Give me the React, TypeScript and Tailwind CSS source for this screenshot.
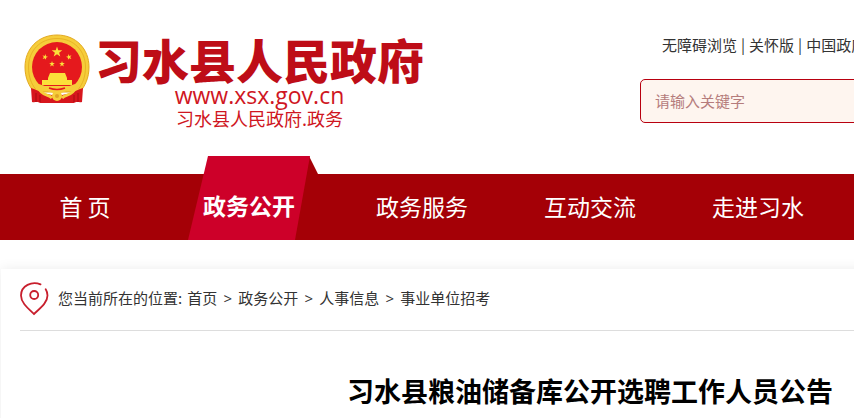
const navItems = ["首 页", "政务公开", "政务服务", "互动交流", "走进习水"];
const crumbs = ["首页", "政务公开", "人事信息", "事业单位招考"];
const topLinks = ["无障碍浏览", "关怀版", "中国政府网"];

const STAR = "M0-10 2.3-3.2 9.5-3.1 3.8 1.2 5.9 8.1 0 4-5.9 8.1-3.8 1.2-9.5-3.1-2.3-3.2Z";

function Emblem() {
  return (
    <svg className="h-[70px] w-[68px] shrink-0" viewBox="0 0 68 70" aria-hidden="true">
      {/* Corona de trigo */}
      <path
        d="M34 1C15 1 2 15 2 33c0 11 4 19 9 25l46 0c5-6 9-14 9-25C66 15 53 1 34 1Z"
        fill="#f6cd3a"
        stroke="#e3a91f"
        strokeWidth="1"
      />
      <path
        d="M34 4.500C17 4.500 5.500 17 5.500 33c0 10 3 17 7 22M34 4.500C51 4.500 62.500 17 62.500 33c0 10-3 17-7 22"
        fill="none"
        stroke="#e9b326"
        strokeWidth="1"
      />
      <circle cx="34" cy="33" r="25" fill="#e5191d" />
      <g fill="#fbe03a">
        <path d={STAR} transform="translate(34 18) scale(.56)" />
        <path d={STAR} transform="translate(22 23) rotate(15) scale(.3)" />
        <path d={STAR} transform="translate(46 23) rotate(-15) scale(.3)" />
        <path d={STAR} transform="translate(29 30) scale(.3)" />
        <path d={STAR} transform="translate(39 30) scale(.3)" />
        <path d="M27 39h15l2 5H25Zm-2 5h19v2h5v5H19v-5h6Z" />
      </g>
      {/* Cinta roja */}
      <path
        d="M8 54c4 1 8 3 11 5l15 3 15-3c3-2 7-4 11-5l-1 14c-3 1-5-1-8 1H17c-3-2-5 0-8-1Z"
        fill="#d7161d"
      />
      <path
        d="M11 51c9-1 14 7 23 7s14-8 23-7M16 54c2 8 10 6 13 10m23-10c-2 8-10 6-13 10"
        fill="none"
        stroke="#f6cd3a"
        strokeWidth="3"
      />
      <path d="M19 52h30v3q-8 3-15 3t-15-3Z" fill="#f6cd3a" />
      <path d="M26 54q8 3 16 0" fill="none" stroke="#e5191d" strokeWidth="1.5" />
      <path d="M13 59v9m4-7v7m38-9v9m-4-7v7" stroke="#a80b12" strokeWidth="1" />
      <circle cx="34" cy="62" r="5" fill="#f6cd3a" />
      <circle cx="34" cy="62" r="2" fill="#e0a426" />
    </svg>
  );
}

function Header() {
  return (
    <header className="flex h-[174px] items-start">
      <a href="#" className="flex w-[640px] pl-[23px] pt-[34px]">
        <Emblem />
        <div className="ml-1 flex flex-col items-center whitespace-nowrap text-[#be0d17]">
          <span className="text-[47px] font-black leading-[50px]">习水县人民政府</span>
          <span className="font-['Open_Sans',sans-serif] text-[23px] leading-[23px] text-[#cf1622]">
            www.xsx.gov.cn
          </span>
          <span className="text-[18px] leading-[22px] text-[#cf1622]">习水县人民政府.政务</span>
        </div>
      </a>
      <div className="flex-1 pt-[33px]">
        <div className="flex gap-1 whitespace-nowrap pl-[22px] text-[15px] leading-[24px] text-[#333]">
          {topLinks.map((label, i) => (
            <span key={label} className="flex gap-1">
              {i > 0 && <span>|</span>}
              <a href="#">{label}</a>
            </span>
          ))}
        </div>
        <input
          type="text"
          aria-label="请输入关键字"
          placeholder="请输入关键字"
          className="mt-[22px] block h-[44px] w-full rounded-[5px] border border-[#b8000f] bg-[#fef5ef] px-[14px] pb-[2px] text-[15px] outline-none placeholder:text-[#b57c7c]"
        />
      </div>
    </header>
  );
}

function Nav() {
  return (
    <nav className="flex h-[66px] bg-[#a40006] text-[23px] text-white">
      {navItems.map((label, i) =>
        i === 1 ? (
          <a
            key={label}
            href="#"
            aria-current="page"
            className="relative flex w-[168px] items-center justify-center pb-1 pr-[10px] font-bold"
          >
            {/* La pestaña activa sobresale por encima de la barra */}
            <svg className="absolute bottom-0 left-[18px] h-[85px] w-[132px]" viewBox="0 0 132 85" aria-hidden="true">
              <path d="M121 1 130 19H116Z" fill="#a40006" />
              <path d="M20 1H122L107 85H0Z" fill="#cd0029" />
            </svg>
            <span className="relative">{label}</span>
          </a>
        ) : (
          <a key={label} href="#" className="flex w-[168px] items-center justify-center pb-[2px] first:w-[170px]">
            {label}
          </a>
        )
      )}
    </nav>
  );
}

function PinIcon() {
  return (
    <svg
      className="h-[34px] w-[30px] shrink-0"
      viewBox="0 0 30 34"
      fill="none"
      stroke="#c81f2d"
      strokeWidth="1.8"
      strokeLinecap="round"
      aria-hidden="true"
    >
      <path d="M20.500 2.300C12 -1.200 1 3.500 1 13.500c0 7 6 12 13 18.500C21 25.500 27.500 20.500 27.500 13.500c0-2.500-.6-4.300-1.800-6.200" />
      <circle cx="14.200" cy="13" r="4" />
    </svg>
  );
}

export default function App() {
  return (
    <div className="overflow-hidden bg-white font-['Noto_Sans_CJK_SC',sans-serif]">
      <div className="min-w-[1180px]">
        <Header />
        <Nav />
        <main className="ml-px mt-[29px] min-h-[160px] bg-white pl-[19px] shadow-[0_0_12px_rgba(0,0,0,0.08)]">
          <div className="flex h-[62px] items-center gap-2 border-b border-[#ddd] pb-[2px] text-[15px] text-[#333]">
            <PinIcon />
            <div className="flex whitespace-nowrap">
              <span className="mr-[5px]">您当前所在的位置:</span>
              {crumbs.map((label, i) => (
                <span key={label} className="flex">
                  {i > 0 && <span className="w-[21px] text-center font-['Open_Sans',sans-serif]">&gt;</span>}
                  <a href="#">{label}</a>
                </span>
              ))}
            </div>
          </div>
          <h1 className="mt-[40px] pr-5 text-center text-[27px] font-bold leading-[40px] text-black">
            习水县粮油储备库公开选聘工作人员公告
          </h1>
        </main>
      </div>
    </div>
  );
}
